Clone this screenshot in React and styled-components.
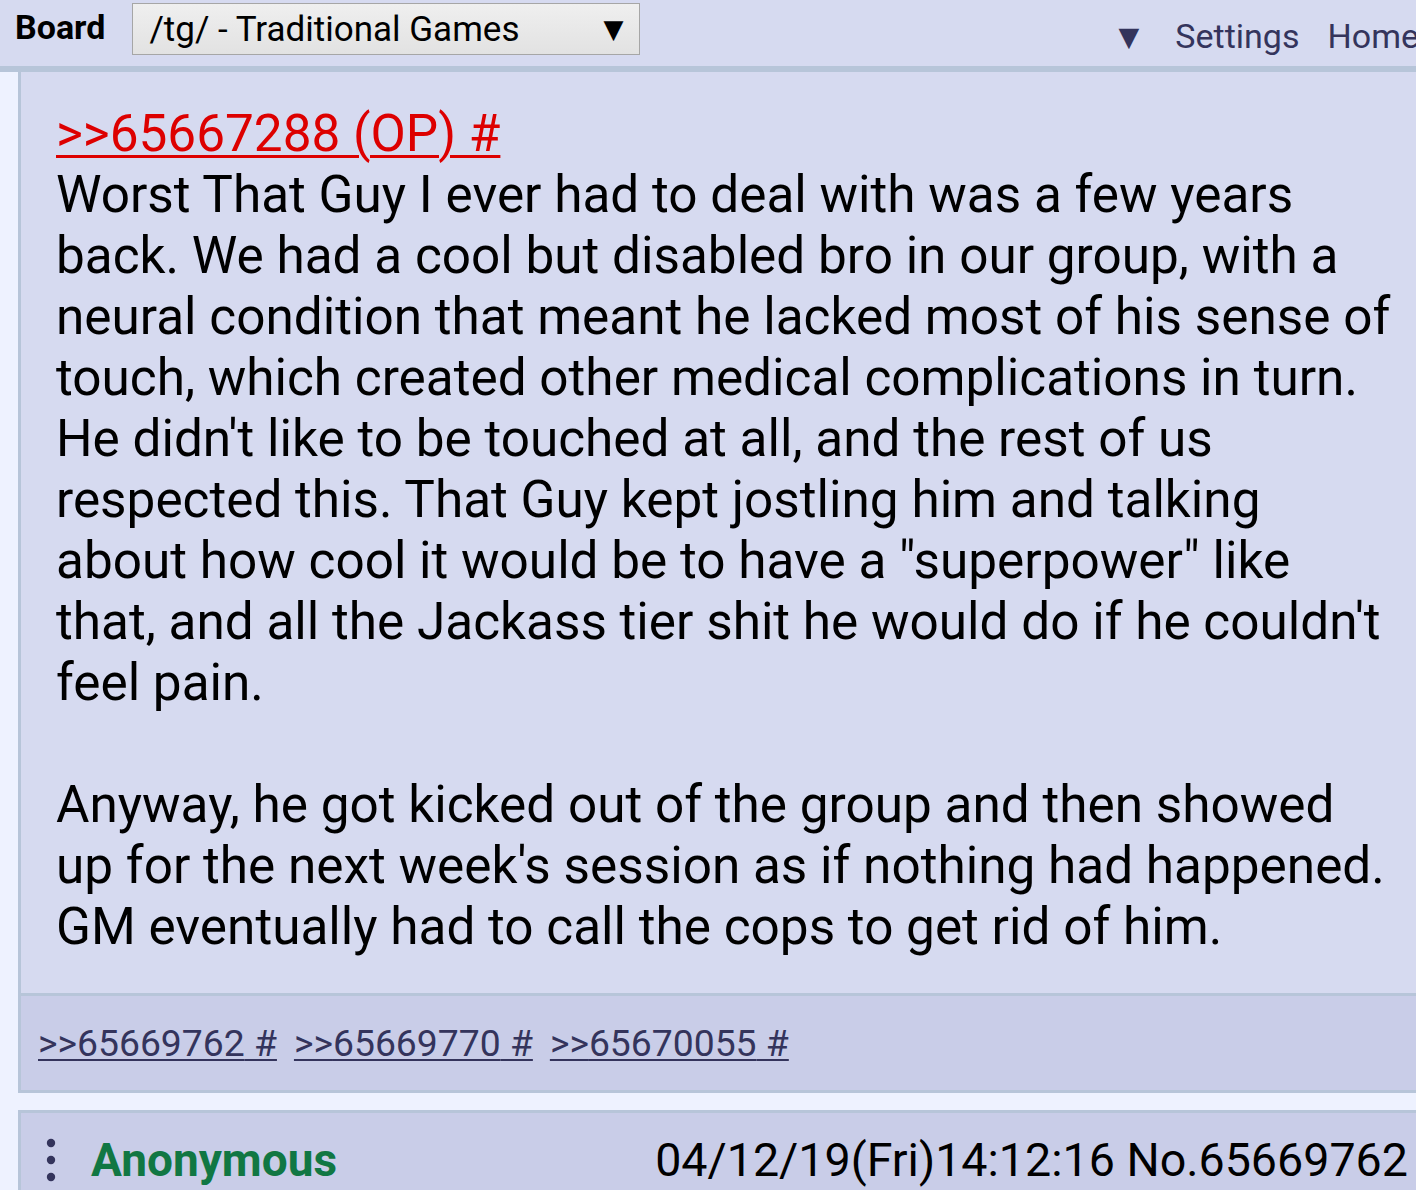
import styled, { createGlobalStyle } from "styled-components"

const GlobalStyle = createGlobalStyle`
  html, body {
    margin: 0;
    padding: 0;
    background: #eef2ff;
    overflow: hidden;
  }
  body {
    font-family: Roboto, "Noto Sans", sans-serif;
    color: #000;
  }
`

const Page = styled.div`
  width: 1440px;
`

const TopBar = styled.header`
  display: flex;
  align-items: flex-start;
  justify-content: space-between;
  height: 66px;
  padding: 0 21px 0 15px;
  background: #d6daf0;
  border-bottom: 6px solid #b7c5d9;
`

const LeftGroup = styled.div`
  display: flex;
  align-items: center;
  gap: 27px;
  margin-top: 3px;
`

const RightGroup = styled.nav`
  display: flex;
  align-items: center;
  gap: 28px;
  margin-top: 16px;
`

const BoardLabel = styled.span`
  font-weight: 700;
  font-size: 34px;
  margin-top: -5px;
`

const Select = styled.div`
  display: flex;
  align-items: center;
  justify-content: space-between;
  box-sizing: border-box;
  width: 508px;
  height: 52px;
  padding: 0 16px 0 16px;
  font-size: 35px;
  background: linear-gradient(#efefef, #e2e2e2);
  border: 1px solid #a6a6a6;
`

const Caret = styled.span`
  font-family: "DejaVu Sans", sans-serif;
  font-size: ${(p) => p.size}px;
  color: ${(p) => p.color || "#000"};
  margin-right: ${(p) => p.gap || 0}px;
`

const NavLink = styled.a`
  font-size: 34px;
  line-height: 40px;
  color: #34345c;
  text-decoration: none;
`

const Post = styled.article`
  margin-left: 18px;
  border-left: 3px solid #b7c5d9;
  background: #d6daf0;
`

const PostBody = styled.div`
  padding: 31px 0 36px 35px;
  width: 1338px;
  font-size: 51.3px;
  line-height: 61px;
`

const QuoteLink = styled.a`
  display: block;
  color: #dd0000;
  text-decoration: underline;
  text-underline-offset: 4px;
  text-decoration-thickness: 3px;
`

const Paragraph = styled.p`
  margin: 0;
`

const Backlinks = styled.div`
  display: flex;
  align-items: center;
  gap: 17px;
  height: 94px;
  padding-left: 17px;
  background: #c9cde8;
  border-top: 3px solid #b7c5d9;
  border-bottom: 3px solid #b7c5d9;
  font-size: 37.3px;
`

const Backlink = styled.a`
  color: #34345c;
  text-decoration: underline;
  text-underline-offset: 3px;
  text-decoration-thickness: 2px;
`

const ReplyPost = styled.article`
  margin: 17px 0 0 18px;
  border-left: 3px solid #b7c5d9;
  border-top: 3px solid #b7c5d9;
  background: #c9cde8;
  height: 120px;
`

const ReplyHeader = styled.div`
  display: flex;
  align-items: center;
  height: 94px;
  padding: 0 32px 0 25px;
`

const Kebab = styled.svg`
  width: 10px;
  height: 44px;
  margin-right: 35px;
`

const Name = styled.span`
  font-weight: 700;
  font-size: 46px;
  color: #117743;
`

const DateInfo = styled.span`
  margin-left: auto;
  font-size: 46.6px;
`

const paragraphs = [
  "Worst That Guy I ever had to deal with was a few years back. We had a cool but disabled bro in our group, with a neural condition that meant he lacked most of his sense of touch, which created other medical complications in turn. He didn't like to be touched at all, and the rest of us respected this. That Guy kept jostling him and talking about how cool it would be to have a \"superpower\" like that, and all the Jackass tier shit he would do if he couldn't feel pain.",
  "Anyway, he got kicked out of the group and then showed up for the next week's session as if nothing had happened. GM eventually had to call the cops to get rid of him.",
]

const backlinks = ["65669762", "65669770", "65670055"]

export default function App() {
  return (
    <Page>
      <GlobalStyle />
      <TopBar>
        <LeftGroup>
          <BoardLabel>Board</BoardLabel>
          <Select>
            <span>/tg/ - Traditional Games</span>
            <Caret size={26}>▼</Caret>
          </Select>
        </LeftGroup>
        <RightGroup>
          <Caret size={27} color="#34345c" gap={8}>▼</Caret>
          <NavLink>Settings</NavLink>
          <NavLink>Home</NavLink>
        </RightGroup>
      </TopBar>

      <Post>
        <PostBody>
          <QuoteLink>&gt;&gt;65667288 (OP) #</QuoteLink>
          <Paragraph>{paragraphs[0]}</Paragraph>
          <Paragraph>&nbsp;</Paragraph>
          <Paragraph>{paragraphs[1]}</Paragraph>
        </PostBody>
        <Backlinks>
          {backlinks.map((id) => (
            <Backlink key={id}>&gt;&gt;{id} #</Backlink>
          ))}
        </Backlinks>
      </Post>

      <ReplyPost>
        <ReplyHeader>
          <Kebab viewBox="0 0 10 44">
            <circle cx="5" cy="5" r="4.2" fill="#34345c" />
            <circle cx="5" cy="22" r="4.2" fill="#34345c" />
            <circle cx="5" cy="39" r="4.2" fill="#34345c" />
          </Kebab>
          <Name>Anonymous</Name>
          <DateInfo>04/12/19(Fri)14:12:16 No.65669762</DateInfo>
        </ReplyHeader>
      </ReplyPost>
    </Page>
  )
}
